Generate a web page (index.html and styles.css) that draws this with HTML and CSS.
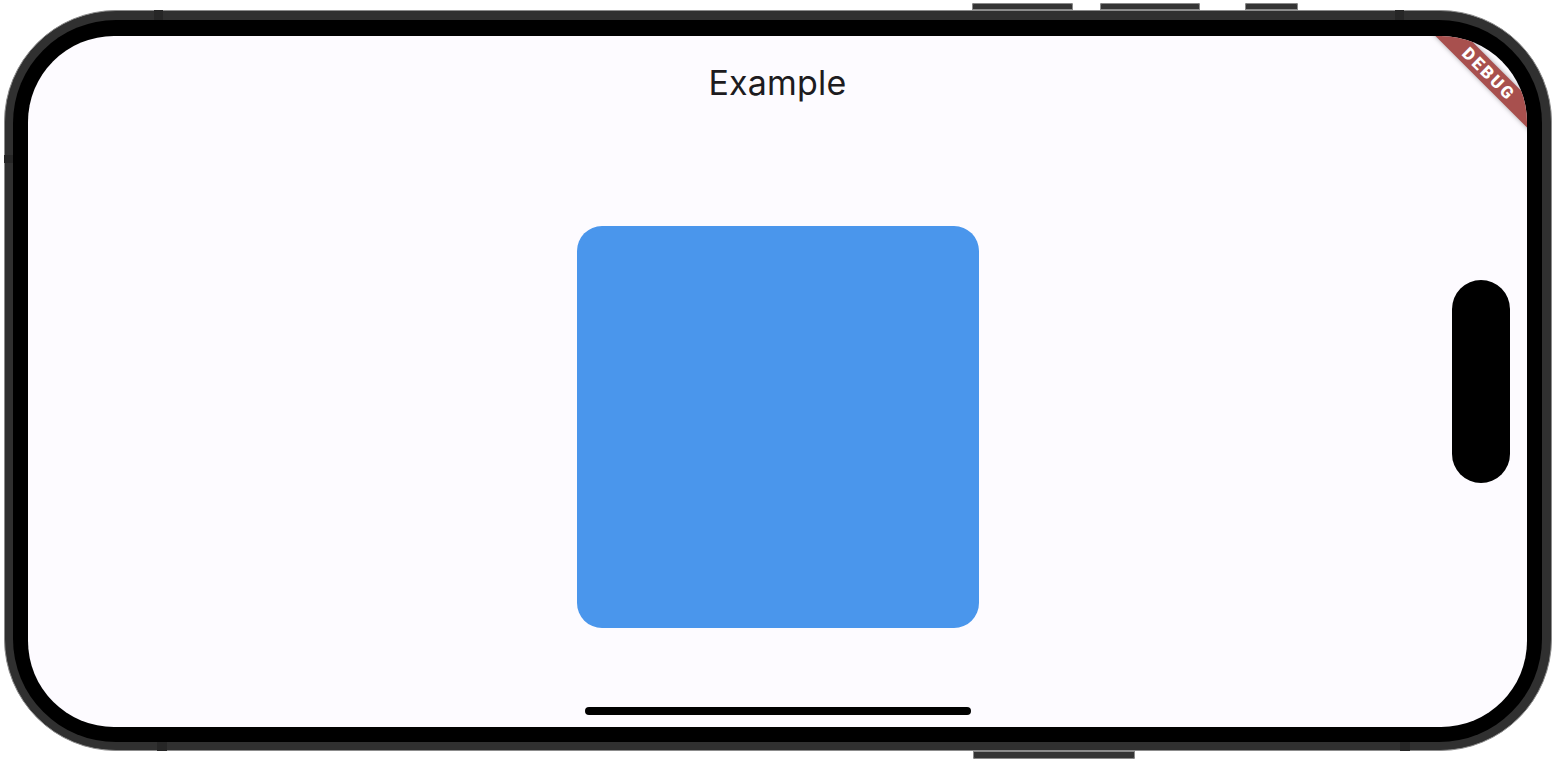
FILE: index.html
```html
<!DOCTYPE html>
<html>
<head>
<meta charset="utf-8">
<link rel="stylesheet" href="styles.css">
</head>
<body>
<div class="page">
  <div class="top-buttons">
    <span class="btn btn-a"></span>
    <span class="btn btn-b"></span>
    <span class="btn btn-c"></span>
  </div>
  <div class="device">
    <div class="bezel">
      <div class="screen">
        <div class="appbar"><span class="title">Example</span></div>
        <div class="body">
          <div class="square"></div>
        </div>
        <div class="island"></div>
        <div class="home"></div>
        <div class="banner"><span>DEBUG</span></div>
      </div>
    </div>
    <span class="ant ant-tl"></span>
    <span class="ant ant-lt"></span>
    <span class="ant ant-tr"></span>
    <span class="ant ant-bl"></span>
    <span class="ant ant-br"></span>
  </div>
  <div class="bottom-buttons">
    <span class="btn btn-d"></span>
  </div>
</div>
</body>
</html>
```
FILE: styles.css
```css
html, body {
  margin: 0;
  padding: 0;
  background: #ffffff;
}
body {
  width: 1555px;
  height: 771px;
  overflow: hidden;
}
.page {
  padding-top: 3px;
  padding-left: 4px;
}
.top-buttons {
  height: 7px;
  display: flex;
  align-items: flex-end;
  padding-left: 968px;
}
.btn {
  display: block;
  background: #343434;
  box-shadow: 0 0 0 1px #8a8a8a inset;
}
.btn-a { width: 101px; height: 7px; border-radius: 2px 2px 0 0; }
.btn-b { width: 100px; height: 7px; border-radius: 2px 2px 0 0; margin-left: 27px; }
.btn-c { width: 53px; height: 7px; border-radius: 2px 2px 0 0; margin-left: 45px; }
.bottom-buttons {
  height: 9px;
  display: flex;
  padding-left: 969px;
}
.btn-d { width: 162px; height: 8px; border-radius: 0 0 2px 2px; }

.device {
  position: relative;
  width: 1548px;
  height: 741px;
  box-sizing: border-box;
  border: 1px solid #8c8c8c;
  border-radius: 112px;
  background: #303030;
  padding: 9px 9px 8px 8px;
}
.bezel {
  height: 100%;
  box-sizing: border-box;
  background: #000000;
  border-radius: 103px;
  padding: 16px 15px 15px 15px;
}
.screen {
  position: relative;
  height: 100%;
  background: #fdfbff;
  border-radius: 86px;
  overflow: hidden;
  display: flex;
  flex-direction: column;
}
.appbar {
  height: 91px;
  flex: none;
  display: flex;
  align-items: center;
  justify-content: center;
}
.title {
  font-family: Inter, "Noto Sans", sans-serif;
  font-size: 34px;
  color: #1d1b20;
  letter-spacing: 0.2px;
  padding-top: 1px;
}
.body {
  flex: 1;
  display: flex;
  align-items: center;
  justify-content: center;
}
.square {
  width: 402px;
  height: 402px;
  background: #4a96ec;
  border-radius: 25px;
}
.island {
  position: absolute;
  right: 17px;
  top: 244px;
  width: 58px;
  height: 203px;
  background: #000;
  border-radius: 29px;
}
.home {
  position: absolute;
  left: 557px;
  top: 671px;
  width: 386px;
  height: 8px;
  background: #000;
  border-radius: 4px;
}
.banner {
  position: absolute;
  left: 1361px;
  top: 27px;
  width: 200px;
  height: 22px;
  background: #a8504e;
  transform: rotate(45deg);
  display: flex;
  align-items: center;
  justify-content: center;
  box-shadow: 0 0 5px rgba(0,0,0,0.35);
}
.banner span {
  font-family: Roboto, "Liberation Sans", sans-serif;
  font-weight: 900;
  font-size: 17px;
  letter-spacing: 2.5px;
  color: #ffffff;
  line-height: 1;
}
.ant {
  position: absolute;
  background: #262626;
}
.ant-tl { left: 149px; top: -1px; width: 9px; height: 10px; }
.ant-tr { left: 1390px; top: -1px; width: 9px; height: 10px; }
.ant-bl { left: 152px; bottom: -1px; width: 10px; height: 9px; }
.ant-br { left: 1395px; bottom: -1px; width: 10px; height: 9px; }
.ant-lt { left: -1px; top: 144px; width: 9px; height: 8px; }
```
